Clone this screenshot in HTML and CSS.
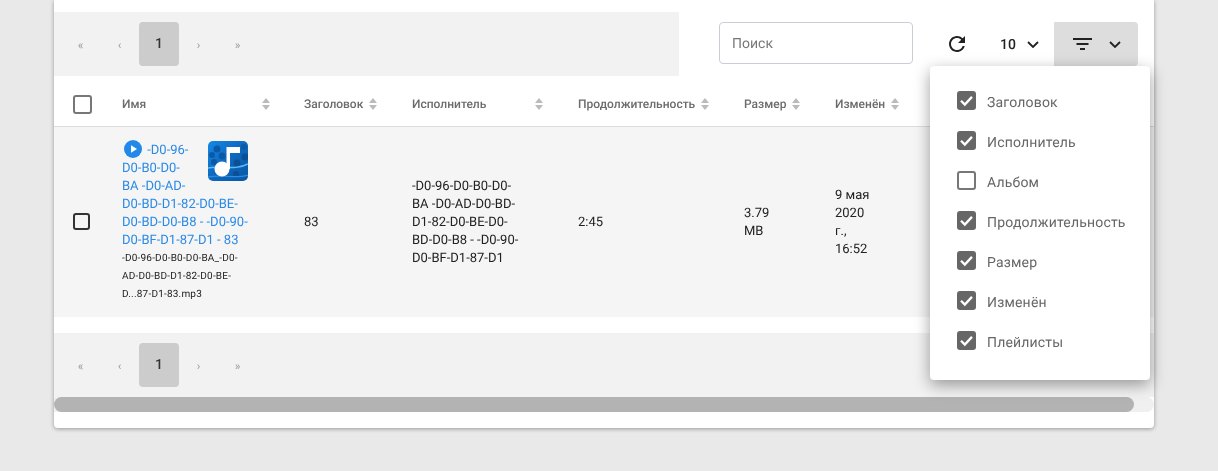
FILE: index.html
```html
<!DOCTYPE html>
<html lang="ru">
<head>
<meta charset="utf-8">
<title>Файлы</title>
<link rel="stylesheet" href="styles.css">
</head>
<body>
<main class="card">
  <div class="toolbar">
    <nav class="pager">
      <span class="page">«</span><span class="page">‹</span><span class="page active">1</span><span class="page">›</span><span class="page">»</span>
    </nav>
    <input class="search" type="text" placeholder="Поиск">
    <div class="tools">
      <svg class="refresh" viewBox="0 0 24 24" width="24" height="24"><path d="M17.65 6.35A7.958 7.958 0 0 0 12 4c-4.42 0-7.99 3.58-7.99 8s3.57 8 7.99 8c3.73 0 6.84-2.55 7.73-6h-2.08A5.99 5.99 0 0 1 12 18c-3.31 0-6-2.69-6-6s2.69-6 6-6c1.66 0 3.14.69 4.22 1.78L13 11h7V4l-2.35 2.35z"/></svg>
      <span class="per-page">10</span>
      <svg class="chev" viewBox="0 0 12 7" width="12" height="7"><path d="M1 1l5 5 5-5" fill="none" stroke="#222" stroke-width="1.8"/></svg>
      <div class="filter-btn">
        <svg viewBox="0 0 19 12" width="19" height="12"><path d="M0 1h19M3.500 6h12M7 11h5" stroke="#222" stroke-width="1.900" fill="none"/></svg>
        <svg class="chev" viewBox="0 0 12 7" width="12" height="7"><path d="M1 1l5 5 5-5" fill="none" stroke="#222" stroke-width="1.8"/></svg>
      </div>
    </div>
  </div>

  <div class="table">
    <div class="row head">
      <div class="c c-check"><span class="box box-head"></span></div>
      <div class="c c-name"><span class="grow">Имя</span><svg class="sort" viewBox="0 0 8 12" width="8" height="12"><path d="M4 0l4 5H0zM4 12 0 7h8z"/></svg></div>
      <div class="c c-title">Заголовок<svg class="sort" viewBox="0 0 8 12" width="8" height="12"><path d="M4 0l4 5H0zM4 12 0 7h8z"/></svg></div>
      <div class="c c-artist"><span class="grow">Исполнитель</span><svg class="sort" viewBox="0 0 8 12" width="8" height="12"><path d="M4 0l4 5H0zM4 12 0 7h8z"/></svg></div>
      <div class="c c-len">Продолжительность<svg class="sort" viewBox="0 0 8 12" width="8" height="12"><path d="M4 0l4 5H0zM4 12 0 7h8z"/></svg></div>
      <div class="c c-size">Размер<svg class="sort" viewBox="0 0 8 12" width="8" height="12"><path d="M4 0l4 5H0zM4 12 0 7h8z"/></svg></div>
      <div class="c c-date">Изменён<svg class="sort" viewBox="0 0 8 12" width="8" height="12"><path d="M4 0l4 5H0zM4 12 0 7h8z"/></svg></div>
    </div>
    <div class="row body">
      <div class="c c-check"><span class="box box-row"></span></div>
      <div class="c c-name">
        <div class="name-block">
          <svg class="art" viewBox="0 0 40 40" width="40" height="40">
            <defs><linearGradient id="bg" x1="0" y1="0" x2="1" y2="1"><stop offset="0" stop-color="#1488e6"/><stop offset=".5" stop-color="#0e68bd"/><stop offset="1" stop-color="#0a55a4"/></linearGradient></defs>
            <rect width="40" height="40" rx="5" fill="url(#bg)"/>
            <circle cx="9" cy="8" r="3.500" fill="#0c5aa6"/><circle cx="4" cy="14" r="3" fill="#0c5aa6"/><circle cx="6" cy="21" r="3" fill="#0c5aa6"/><circle cx="14" cy="15" r="3.500" fill="#0c5aa6"/><circle cx="37" cy="16" r="3.500" fill="#0c4f94"/><circle cx="29" cy="22" r="3.500" fill="#0c4f94"/><circle cx="36" cy="6" r="3" fill="#0c5aa6"/><circle cx="28" cy="33" r="3" fill="#0c4f94"/>
            <path d="M0 27c10-3 28 3 40-4" stroke="#5cbcf6" stroke-width="1.500" fill="none"/>
            <path d="M0 36c14-3 26 2 40-2" stroke="#2a8ddd" stroke-width="1.300" fill="none"/>
            <circle cx="14" cy="28" r="7.500" fill="#fff"/>
            <path d="M18.500 28V6H32V12H22V28z" fill="#fff"/>
          </svg>
          <a class="track"><svg class="play" viewBox="0 0 18 18" width="18" height="18"><circle cx="9" cy="9" r="9" fill="#2289e8"/><path d="M7 5.200 13 9l-6 3.800z" fill="#fff"/></svg> -D0-96-D0-B0-D0-BA -D0-AD-D0-BD-D1-82-D0-BE-D0-BD-D0-B8 - -D0-90-D0-BF-D1-87-D1 - 83</a>
          <div class="file">-D0-96-D0-B0-D0-BA_-D0-AD-D0-BD-D1-82-D0-BE-D...87-D1-83.mp3</div>
        </div>
      </div>
      <div class="c c-title">83</div>
      <div class="c c-artist"><span class="artist-text">-D0-96-D0-B0-D0-BA -D0-AD-D0-BD-D1-82-D0-BE-D0-BD-D0-B8 - -D0-90-D0-BF-D1-87-D1</span></div>
      <div class="c c-len">2:45</div>
      <div class="c c-size"><span class="size-text">3.79 MB</span></div>
      <div class="c c-date"><span class="date-text">9 мая 2020 г., 16:52</span></div>
    </div>
  </div>

  <div class="bottom-bar">
    <nav class="pager">
      <span class="page">«</span><span class="page">‹</span><span class="page active">1</span><span class="page">›</span><span class="page">»</span>
    </nav>
  </div>
  <div class="scroll"><div class="thumb"></div></div>

  <div class="menu">
    <label class="item"><span class="box on"><svg viewBox="0 0 18 18" width="19" height="19"><path d="M3.800 9.200 7.400 12.800 14.200 5.600" fill="none" stroke="#fff" stroke-width="2.200"/></svg></span>Заголовок</label>
    <label class="item"><span class="box on"><svg viewBox="0 0 18 18" width="19" height="19"><path d="M3.800 9.200 7.400 12.800 14.200 5.600" fill="none" stroke="#fff" stroke-width="2.200"/></svg></span>Исполнитель</label>
    <label class="item"><span class="box off"></span>Альбом</label>
    <label class="item"><span class="box on"><svg viewBox="0 0 18 18" width="19" height="19"><path d="M3.800 9.200 7.400 12.800 14.200 5.600" fill="none" stroke="#fff" stroke-width="2.200"/></svg></span>Продолжительность</label>
    <label class="item"><span class="box on"><svg viewBox="0 0 18 18" width="19" height="19"><path d="M3.800 9.200 7.400 12.800 14.200 5.600" fill="none" stroke="#fff" stroke-width="2.200"/></svg></span>Размер</label>
    <label class="item"><span class="box on"><svg viewBox="0 0 18 18" width="19" height="19"><path d="M3.800 9.200 7.400 12.800 14.200 5.600" fill="none" stroke="#fff" stroke-width="2.200"/></svg></span>Изменён</label>
    <label class="item"><span class="box on"><svg viewBox="0 0 18 18" width="19" height="19"><path d="M3.800 9.200 7.400 12.800 14.200 5.600" fill="none" stroke="#fff" stroke-width="2.200"/></svg></span>Плейлисты</label>
  </div>
</main>
</body>
</html>
```

FILE: styles.css
```css
* { box-sizing: border-box; }
html, body { margin: 0; height: 100%; overflow: hidden; }
body {
  background: #e9e9e9;
  font-family: Roboto, "Liberation Sans", sans-serif;
  text-rendering: geometricPrecision;
  color: #222;
}
.card {
  position: relative;
  width: 1100px;
  height: 428px;
  margin-left: 54px;
  padding-top: 12px;
  background: #fff;
  border-radius: 0 0 4px 4px;
  box-shadow: 0 1px 4px rgba(0,0,0,.35);
  transform: translateZ(0);
}
.toolbar { display: flex; align-items: flex-start; height: 64px; }
.pager {
  display: flex;
  align-items: center;
  width: 625px;
  height: 64px;
  padding-left: 7px;
  background: #f2f2f2;
}
.page {
  width: 39px;
  height: 44px;
  display: flex;
  align-items: center;
  justify-content: center;
  padding-top: 1px;
  font-size: 12px;
  color: #999;
}
.page.active {
  width: 40px;
  padding-top: 0;
  background: #ccc;
  border-radius: 4px;
  font-size: 14px;
  font-weight: 500;
  color: #333;
}
.search {
  width: 194px;
  height: 42px;
  margin: 10px 0 0 40px;
  padding: 1px 12px 0;
  border: 1px solid #c9ced6;
  border-radius: 4px;
  font: 14px Roboto, sans-serif;
  text-rendering: geometricPrecision;
  outline: none;
}
.search::placeholder { color: #777; opacity: 1; }
.tools { display: flex; align-items: center; height: 44px; margin: 10px 0 0 32px; }
.refresh { fill: #222; }
.per-page { margin-left: 31px; padding-top: 2px; font-size: 14px; font-weight: 500; }
.chev { margin-left: 11px; }
.filter-btn {
  display: flex;
  align-items: center;
  gap: 17px;
  width: 84px;
  height: 44px;
  margin-left: 15px;
  padding-left: 19px;
  background: #ddd;
  border-radius: 0 4px 4px 0;
}
.filter-btn .chev { margin-left: 0; }
.table { width: 100%; }
.row { display: grid; grid-template-columns: 68px 182px 108px 166px 166px 91px 319px; align-items: center; }
.row.head {
  height: 51px;
  padding-top: 6px;
  border-bottom: 1px solid #ddd;
  font-size: 12px;
  font-weight: 500;
  color: #6b6b6b;
}
.row.head .c { display: flex; align-items: center; gap: 6px; }
.row.head .c-name { padding-right: 34px; }
.row.head .c-artist { padding-right: 35px; }
.grow { flex: 1; }
.sort { fill: #bbb; flex: none; }
.row.body { height: 190px; background: #f5f5f5; font-size: 13px; color: #222; }
.c-check { padding-left: 19px; }
.box { display: block; width: 18px; height: 18px; border-radius: 2px; }
.box-head { width: 19px; height: 19px; border: 2px solid #777; border-radius: 3px; }
.box-row { width: 17px; height: 17px; margin-bottom: 2px; border: 2px solid #333; border-radius: 3px; }
.name-block { width: 126px; line-height: 18px; }
.art { float: right; margin: 1px 0 0 14px; }
.track { color: #2b8ae6; }
.play { vertical-align: -4px; margin: 0 2px 0 2px; }
.file { font-size: 10px; letter-spacing: .2px; color: #222; }
.artist-text { display: block; width: 110px; padding-top: 2px; line-height: 18px; }
.size-text { display: block; width: 36px; padding-top: 2px; line-height: 18px; }
.date-text { display: block; width: 36px; padding-top: 2px; line-height: 18px; }
.bottom-bar { margin-top: 16px; }
.bottom-bar .pager { width: 100%; }
.scroll { height: 15px; background: #f0f0f0; border-radius: 0 8px 8px 0; }
.thumb { width: 1080px; height: 15px; background: #b3b3b3; border-radius: 8px; }
.menu {
  position: absolute;
  top: 66px;
  left: 876px;
  width: 220px;
  height: 314px;
  padding: 17px 0 0 27px;
  background: #fff;
  border-radius: 4px;
  box-shadow: 0 5px 16px rgba(0,0,0,.38);
}
.item {
  display: flex;
  align-items: center;
  gap: 11px;
  height: 40px;
  font-size: 14px;
  letter-spacing: .18px;
  color: #666;
}
.item .box { flex: none; width: 19px; height: 19px; margin-bottom: 5px; }
.box.on { background: #666; border-radius: 3px; }
.box.on svg { display: block; }
.box.off { border: 2px solid #777; border-radius: 3px; }
```
